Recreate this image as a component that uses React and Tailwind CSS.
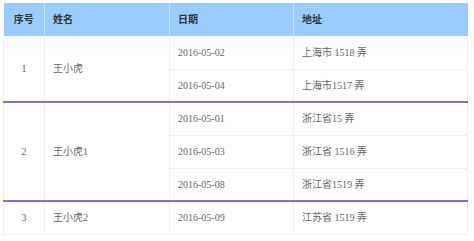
import React from "react";

const groups = [
  { no: "1", name: "王小虎", rows: [["2016-05-02", "上海市 1518 弄"], ["2016-05-04", "上海市1517 弄"]] },
  { no: "2", name: "王小虎1", rows: [["2016-05-01", "浙江省15 弄"], ["2016-05-03", "浙江省 1516 弄"], ["2016-05-08", "浙江省1519 弄"]] },
  { no: "3", name: "王小虎2", rows: [["2016-05-09", "江苏省 1519 弄"]] },
];

export default function App() {
  return (
    <div className="w-[474px] h-[241px] bg-white pt-[3px] pl-[3px]" style={{ fontFamily: '"Liberation Serif", "Noto Sans CJK SC", serif' }}>
      <table className="w-[465px] border-collapse table-fixed text-[10px] text-[#666]">
        <colgroup>
          <col className="w-[41px]" />
          <col className="w-[125px]" />
          <col className="w-[124px]" />
          <col />
        </colgroup>
        <thead>
          <tr className="h-[33px] bg-[#99ccff] text-[#333] font-bold">
            <th className="border-r border-[#c9e3ff] text-center font-bold">序号</th>
            <th className="border-r border-[#c9e3ff] text-left pl-[8px] font-bold">姓名</th>
            <th className="border-r border-[#c9e3ff] text-left pl-[8px] font-bold">日期</th>
            <th className="text-left pl-[8px] font-bold">地址</th>
          </tr>
        </thead>
        <tbody>
          {groups.map((g, gi) =>
            g.rows.map((r, ri) => {
              const last = ri === g.rows.length - 1;
              const groupEnd = last && gi < groups.length - 1;
              const bottom = groupEnd ? "border-b-2 border-b-[#7373e6]" : "border-b border-b-[#eef0f5]";
              const gBottom = gi < groups.length - 1 ? "border-b-2 border-b-[#7373e6]" : "border-b border-b-[#eef0f5]";
              return (
                <tr key={gi + "-" + ri} className="h-[33px]">
                  {ri === 0 && (
                    <td rowSpan={g.rows.length} className={"text-center border-l border-l-[#eef0f5] border-r border-r-[#eef0f5] " + gBottom}>
                      {g.no}
                    </td>
                  )}
                  {ri === 0 && (
                    <td rowSpan={g.rows.length} className={"pl-[8px] border-r border-r-[#eef0f5] " + gBottom}>
                      {g.name}
                    </td>
                  )}
                  <td className={"pl-[8px] border-r border-r-[#eef0f5] " + bottom}>{r[0]}</td>
                  <td className={"pl-[8px] border-r border-r-[#eef0f5] " + bottom}>{r[1]}</td>
                </tr>
              );
            })
          )}
        </tbody>
      </table>
    </div>
  );
}
